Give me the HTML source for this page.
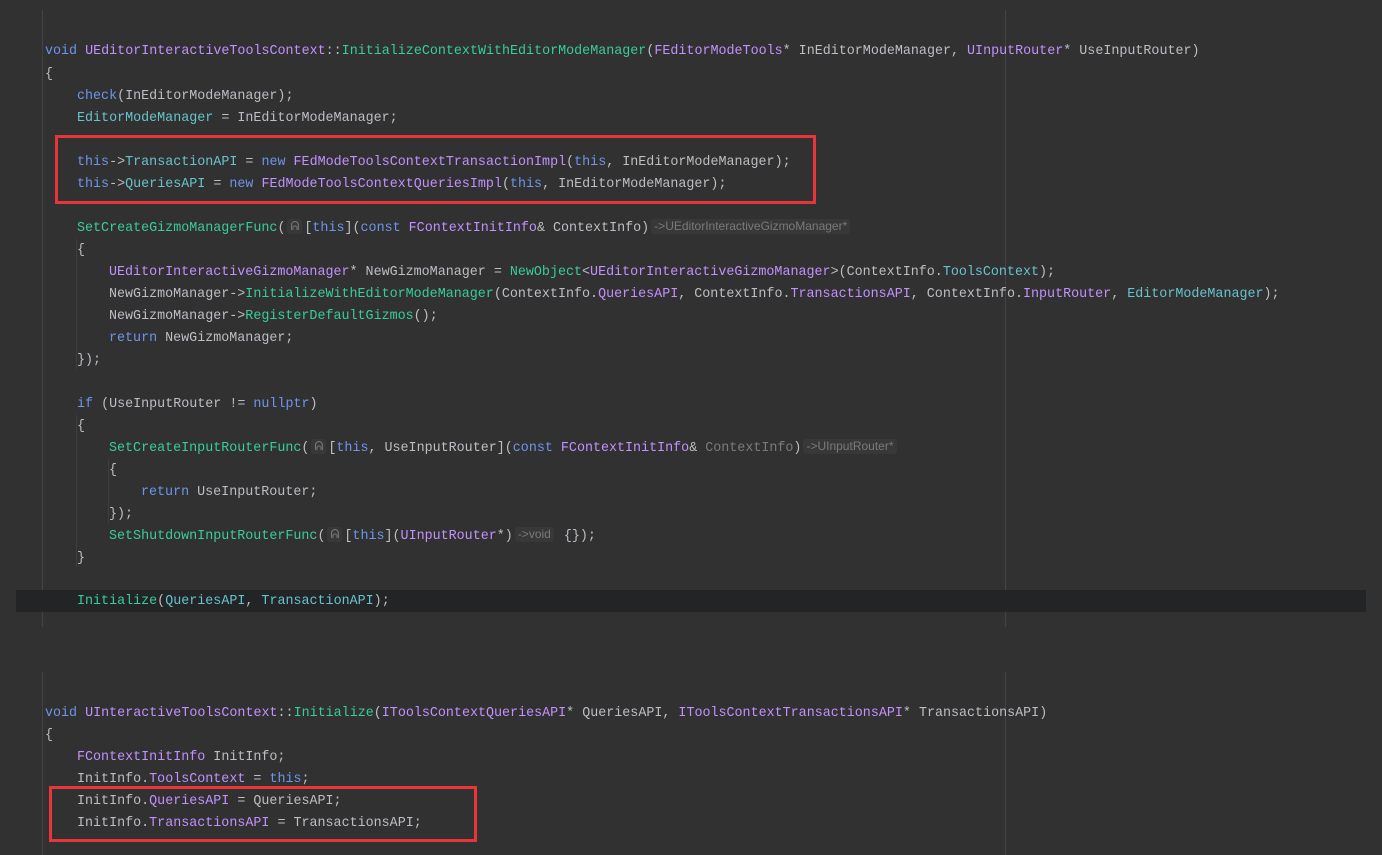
<!DOCTYPE html>
<html><head><meta charset="utf-8"><style>
body{margin:0;width:1382px;height:855px;background:#313131;overflow:hidden;position:relative;font-family:"Liberation Mono",monospace;font-size:13.36px;color:#bcbec4}
.l{position:absolute;height:22px;line-height:22px;white-space:pre}
.k{color:#6c95eb}.c{color:#c191ff}.f{color:#39cc9b}.m{color:#66c3cc}
.h{display:inline-block;font-family:"Liberation Sans",sans-serif;font-size:12px;color:#7a7a7a;background:#383838;line-height:15px;padding:0 3px;border-radius:3px;margin:0 2px;vertical-align:1px}
.vl{position:absolute;width:1px;background:#444}
.box{position:absolute;border:3px solid #e8353a;box-sizing:border-box}
</style></head><body>
<div class="vl" style="left:42px;top:10px;height:617px"></div>
<div class="vl" style="left:1005px;top:10px;height:617px"></div>
<div class="vl" style="left:42px;top:672px;height:183px"></div>
<div class="vl" style="left:1005px;top:672px;height:183px"></div>
<div class="vl" style="left:76px;top:239px;height:130px;background:#3e3e3e"></div>
<div class="vl" style="left:76px;top:415px;height:152px;background:#3e3e3e"></div>
<div class="vl" style="left:108px;top:459px;height:64px;background:#3e3e3e"></div>
<div style="position:absolute;left:16px;top:590px;width:1350px;height:22px;background:#222426"></div>

<div class="l" style="left:45px;top:41px"><span class="k">void</span> <span class="c">UEditorInteractiveToolsContext</span>::<span class="f">InitializeContextWithEditorModeManager</span>(<span class="c">FEditorModeTools</span>* InEditorModeManager, <span class="c">UInputRouter</span>* UseInputRouter)</div>
<div class="l" style="left:45px;top:64px">{</div>
<div class="l" style="left:77px;top:86px"><span class="k">check</span>(InEditorModeManager);</div>
<div class="l" style="left:77px;top:108px"><span class="m">EditorModeManager</span> = InEditorModeManager;</div>
<div class="l" style="left:77px;top:152px"><span class="k">this</span>-&gt;<span class="m">TransactionAPI</span> = <span class="k">new</span> <span class="c">FEdModeToolsContextTransactionImpl</span>(<span class="k">this</span>, InEditorModeManager);</div>
<div class="l" style="left:77px;top:174px"><span class="k">this</span>-&gt;<span class="m">QueriesAPI</span> = <span class="k">new</span> <span class="c">FEdModeToolsContextQueriesImpl</span>(<span class="k">this</span>, InEditorModeManager);</div>
<div class="l" style="left:77px;top:218px"><span class="f">SetCreateGizmoManagerFunc</span>(<span class="h">ᕱ</span>[<span class="k">this</span>](<span class="k">const</span> <span class="c">FContextInitInfo</span>&amp; ContextInfo)<span class="h">-&gt;UEditorInteractiveGizmoManager*</span></div>
<div class="l" style="left:77px;top:240px">{</div>
<div class="l" style="left:109px;top:262px"><span class="c">UEditorInteractiveGizmoManager</span>* NewGizmoManager = <span class="f">NewObject</span>&lt;<span class="c">UEditorInteractiveGizmoManager</span>&gt;(ContextInfo.<span class="m">ToolsContext</span>);</div>
<div class="l" style="left:109px;top:284px">NewGizmoManager-&gt;<span class="f">InitializeWithEditorModeManager</span>(ContextInfo.<span class="c">QueriesAPI</span>, ContextInfo.<span class="c">TransactionsAPI</span>, ContextInfo.<span class="c">InputRouter</span>, <span class="m">EditorModeManager</span>);</div>
<div class="l" style="left:109px;top:306px">NewGizmoManager-&gt;<span class="f">RegisterDefaultGizmos</span>();</div>
<div class="l" style="left:109px;top:328px"><span class="k">return</span> NewGizmoManager;</div>
<div class="l" style="left:77px;top:350px">});</div>
<div class="l" style="left:77px;top:394px"><span class="k">if</span> (UseInputRouter != <span class="k">nullptr</span>)</div>
<div class="l" style="left:77px;top:416px">{</div>
<div class="l" style="left:109px;top:438px"><span class="f">SetCreateInputRouterFunc</span>(<span class="h">ᕱ</span>[<span class="k">this</span>, UseInputRouter](<span class="k">const</span> <span class="c">FContextInitInfo</span>&amp; <span style="color:#7a7a7a">ContextInfo</span>)<span class="h">-&gt;UInputRouter*</span></div>
<div class="l" style="left:109px;top:460px">{</div>
<div class="l" style="left:141px;top:482px"><span class="k">return</span> UseInputRouter;</div>
<div class="l" style="left:109px;top:504px">});</div>
<div class="l" style="left:109px;top:526px"><span class="f">SetShutdownInputRouterFunc</span>(<span class="h">ᕱ</span>[<span class="k">this</span>](<span class="c">UInputRouter</span>*)<span class="h">-&gt;void</span> {});</div>
<div class="l" style="left:77px;top:548px">}</div>
<div class="l" style="left:77px;top:591px"><span class="f">Initialize</span>(<span class="m">QueriesAPI</span>, <span class="m">TransactionAPI</span>);</div>

<div class="l" style="left:45px;top:703px"><span class="k">void</span> <span class="c">UInteractiveToolsContext</span>::<span class="f">Initialize</span>(<span class="c">IToolsContextQueriesAPI</span>* QueriesAPI, <span class="c">IToolsContextTransactionsAPI</span>* TransactionsAPI)</div>
<div class="l" style="left:45px;top:725px">{</div>
<div class="l" style="left:77px;top:747px"><span class="c">FContextInitInfo</span> InitInfo;</div>
<div class="l" style="left:77px;top:769px">InitInfo.<span class="c">ToolsContext</span> = <span class="k">this</span>;</div>
<div class="l" style="left:77px;top:791px">InitInfo.<span class="c">QueriesAPI</span> = QueriesAPI;</div>
<div class="l" style="left:77px;top:813px">InitInfo.<span class="c">TransactionsAPI</span> = TransactionsAPI;</div>

<div class="box" style="left:55px;top:135px;width:761px;height:69px"></div>
<div class="box" style="left:49px;top:786px;width:428px;height:56px"></div>
</body></html>
